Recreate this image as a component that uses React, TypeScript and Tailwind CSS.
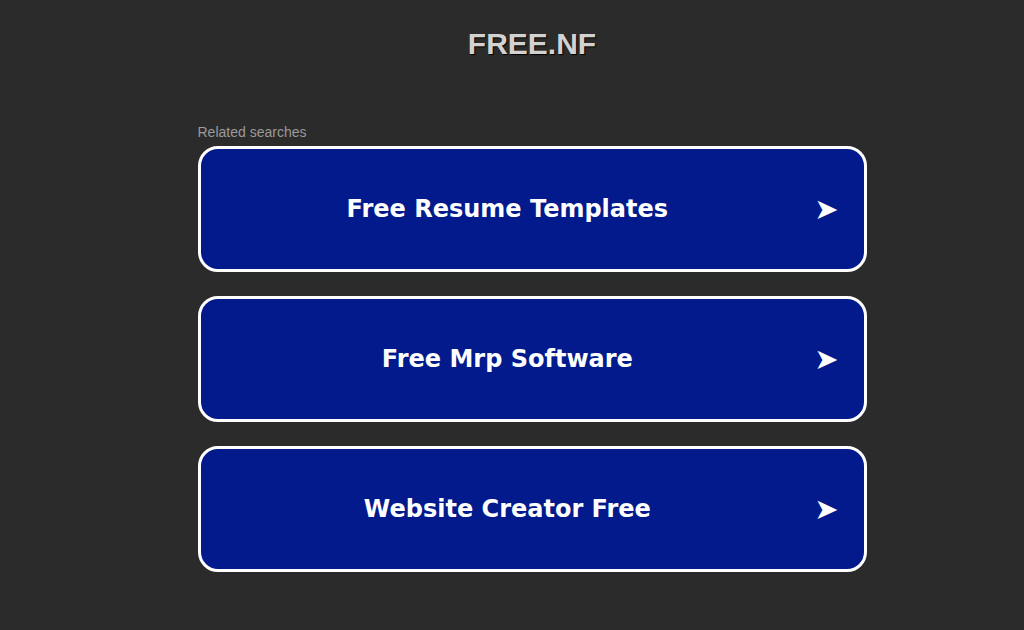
const searches = ["Free Resume Templates", "Free Mrp Software", "Website Creator Free"];

export default function App() {
  return (
    <div className="min-h-[630px] bg-[#2b2b2b] pl-[40px] font-['Liberation_Sans',Arial,sans-serif]">
      <div className="pt-[27px] text-center text-[30px] font-bold leading-[34px] text-[#d2d2d2] [text-shadow:1px_1px_1px_#000]">
        FREE.NF
      </div>
      <div className="mx-auto mt-[64px] w-[669px]">
        <div className="text-[14px] leading-[15px] text-[#9a9a9a]">Related searches</div>
        <div className="mt-[6px] flex flex-col gap-[24px]">
          {searches.map((s) => (
            <a
              key={s}
              href="#"
              className="flex h-[126px] items-center rounded-[20px] border-[3px] border-white bg-[#021a8b] text-white"
            >
              <span className="flex-1 text-center font-['DejaVu_Sans',Verdana,sans-serif] text-[24px] font-bold">
                {s}
              </span>
              <span className="mr-[25px] font-['DejaVu_Sans',sans-serif] text-[29px] leading-none">➤</span>
            </a>
          ))}
        </div>
      </div>
    </div>
  );
}
